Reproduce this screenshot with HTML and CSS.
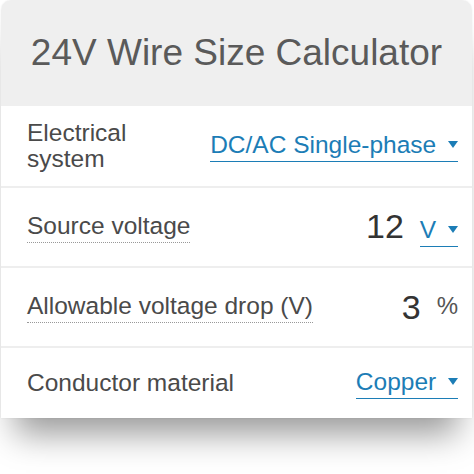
FILE: index.html
```html
<!DOCTYPE html>
<html lang="en">
<head>
  <meta charset="UTF-8" />
  <meta name="viewport" content="width=device-width, initial-scale=1.0" />
  <title>24V Wire Size Calculator</title>
  <link rel="stylesheet" href="styles.css">
</head>
<body>
  <div class="calculator">
    <div class="calc-header">
      <h1 class="calc-title">24V Wire Size Calculator</h1>
    </div>

    <div class="calc-row">
      <div class="label">Electrical<br>system</div>
      <div class="value-group">
        <a class="select-link">DC/AC Single-phase <span class="caret"></span></a>
      </div>
    </div>

    <div class="calc-row">
      <div class="label"><span class="dotted">Source voltage</span></div>
      <div class="value-group">
        <span class="number">12</span>
        <a class="select-link unit">V <span class="caret"></span></a>
      </div>
    </div>

    <div class="calc-row">
      <div class="label"><span class="dotted">Allowable voltage drop (V)</span></div>
      <div class="value-group">
        <span class="number">3</span>
        <span class="unit-text">%</span>
      </div>
    </div>

    <div class="calc-row last">
      <div class="label">Conductor material</div>
      <div class="value-group">
        <a class="select-link">Copper <span class="caret"></span></a>
      </div>
    </div>
  </div>
</body>
</html>
```

FILE: styles.css
```css
html, body {
  margin: 0;
  height: 100%;
  background-color: white;
  font-family: "Liberation Sans", Arial, sans-serif;
}

.calculator {
  margin: 0 2px 0 1px;
  background-color: white;
  border-radius: 10px 10px 0 0;
  box-shadow: 0 30px 32px -14px rgba(0, 0, 0, 0.4), 0 0 2px rgba(0, 0, 0, 0.08);
}

.calc-header {
  background-color: #efefef;
  height: 106px;
  border-radius: 10px 10px 0 0;
  display: flex;
  justify-content: center;
  align-items: center;
}

.calc-title {
  margin: 0;
  font-size: 37px;
  font-weight: normal;
  color: #5a5a5a;
}

.calc-row {
  height: 78px;
  display: flex;
  justify-content: space-between;
  align-items: center;
  padding: 0 14px 0 26px;
  border-top: 2px solid #eeeeee;
}

.calc-row.last {
  height: 70px;
}

.calc-header + .calc-row {
  border-top: none;
  height: 80px;
}

.label {
  font-size: 24.5px;
  line-height: 26px;
  color: #4a4a4a;
}

.dotted {
  display: inline-block;
  line-height: 28px;
  border-bottom: 1px dotted #999;
  padding-bottom: 2px;
}

.value-group {
  display: flex;
  align-items: baseline;
}

.number {
  font-size: 34px;
  color: #333;
  margin-right: 16px;
}

.select-link {
  font-size: 24.5px;
  color: #1c7db6;
  border-bottom: 1px solid #1c7db6;
  padding-bottom: 2px;
  cursor: pointer;
}

.caret {
  display: inline-block;
  width: 0;
  height: 0;
  margin-left: 5px;
  border-left: 5px solid transparent;
  border-right: 5px solid transparent;
  border-top: 7px solid #1c7db6;
  vertical-align: 5px;
}

.unit-text {
  font-size: 24px;
  color: #555;
  position: relative;
  top: -5px;
}
```
